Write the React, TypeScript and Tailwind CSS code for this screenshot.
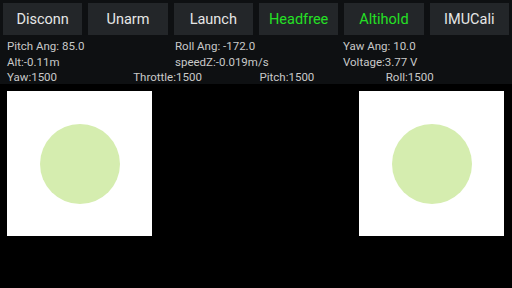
import React from "react";

const buttons = [
  { label: "Disconn", green: false },
  { label: "Unarm", green: false },
  { label: "Launch", green: false },
  { label: "Headfree", green: true },
  { label: "Altihold", green: true },
  { label: "IMUCali", green: false },
];

function Pad() {
  return (
    <div className="w-[145px] h-[145px] bg-white flex items-center justify-center">
      <div className="w-[80px] h-[80px] rounded-full bg-[#d5edaf]" />
    </div>
  );
}

export default function App() {
  return (
    <div
      className="w-[512px] h-[288px] bg-black overflow-hidden"
      style={{ fontFamily: "Roboto, 'Liberation Sans', sans-serif" }}
    >
      <div className="h-[84px] bg-[#0e1012] pt-[3px]">
        <div className="flex gap-[6px] px-[3px]">
          {buttons.map((b) => (
            <div
              key={b.label}
              className={`flex-1 h-[32px] bg-[#232629] flex items-center justify-center pt-[2px] text-[14.5px] ${
                b.green ? "text-[#25e025]" : "text-[#e6e6e6]"
              }`}
            >
              {b.label}
            </div>
          ))}
        </div>
        <div className="pl-[7px] mt-[4px] text-[11.5px] leading-[15.7px] text-[#c9c9c9]">
          <div className="flex">
            <div className="w-[168px]">Pitch Ang: 85.0</div>
            <div className="w-[168px]">Roll Ang: -172.0</div>
            <div className="w-[168px]">Yaw Ang: 10.0</div>
          </div>
          <div className="flex">
            <div className="w-[168px]">Alt:-0.11m</div>
            <div className="w-[168px]">speedZ:-0.019m/s</div>
            <div className="w-[168px]">Voltage:3.77 V</div>
          </div>
          <div className="flex">
            <div className="w-[126.5px]">Yaw:1500</div>
            <div className="w-[126.5px]">Throttle:1500</div>
            <div className="w-[126.5px]">Pitch:1500</div>
            <div className="w-[126.5px]">Roll:1500</div>
          </div>
        </div>
      </div>
      <div className="flex justify-between pl-[7px] pr-[8px] pt-[7px]">
        <Pad />
        <Pad />
      </div>
    </div>
  );
}
